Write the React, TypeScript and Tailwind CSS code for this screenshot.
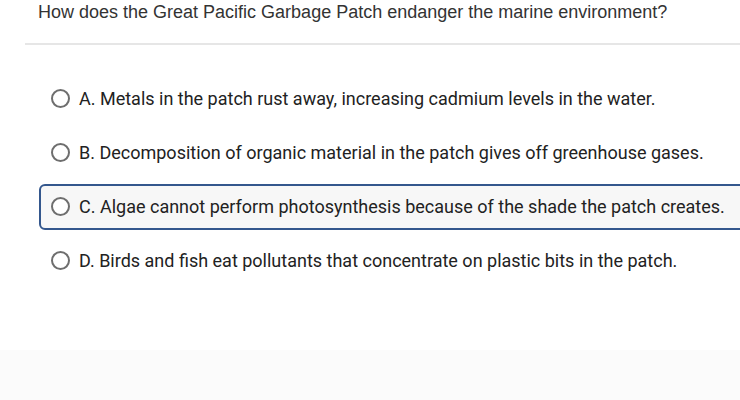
const options = [
  { key: 'A', text: 'A. Metals in the patch rust away, increasing cadmium levels in the water.' },
  { key: 'B', text: 'B. Decomposition of organic material in the patch gives off greenhouse gases.' },
  { key: 'C', text: 'C. Algae cannot perform photosynthesis because of the shade the patch creates.' },
  { key: 'D', text: 'D. Birds and fish eat pollutants that concentrate on plastic bits in the patch.' },
]

export default function App() {
  const focused = 'C'

  return (
    <div className="w-[740px] h-[400px] bg-white flex flex-col overflow-hidden">
      <div className="pl-[38px] text-[18px] leading-[24px] text-[#333333] font-['Liberation_Sans',Arial,sans-serif]">
        How does the Great Pacific Garbage Patch endanger the marine environment?
      </div>
      <div className="ml-[25px] mt-[19px] h-[2px] bg-[#e6e6e6]" />

      <div className="mt-[31px] flex flex-col gap-[8px] font-['Roboto',sans-serif]">
        {options.map((o) => (
          <div
            key={o.key}
            className={`ml-[39px] w-[740px] shrink-0 h-[46px] flex items-center gap-[9px] pl-[10px] rounded-[6px] border-2 ${
              o.key === focused ? 'border-[#34578d] bg-[#f7f7f7]' : 'border-transparent'
            }`}
          >
            <span className="w-[19px] h-[19px] rounded-full border-2 border-[#6e6e6e] bg-white shrink-0 -mt-[2px]" />
            <span className="text-[18px] leading-[24px] text-[#222222] whitespace-nowrap">{o.text}</span>
          </div>
        ))}
      </div>

      <div className="mt-auto h-[50px] bg-[#fbfbfb]" />
    </div>
  )
}
